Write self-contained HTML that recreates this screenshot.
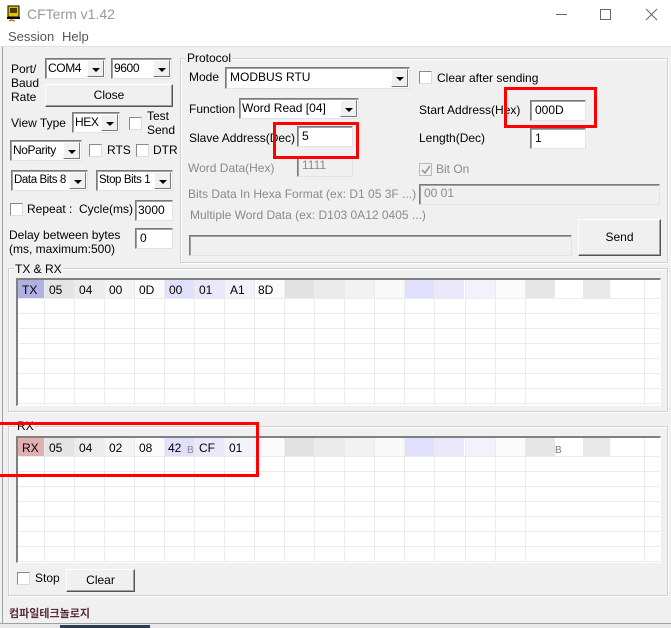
<!DOCTYPE html>
<html><head><meta charset="utf-8"><style>
*{margin:0;padding:0;box-sizing:border-box}
body{width:671px;height:628px;overflow:hidden;background:#f0f0f0;font:12px "Liberation Sans","Noto Sans CJK KR",sans-serif;color:#000;position:relative}
.a{position:absolute;white-space:nowrap}
.t{position:absolute;white-space:nowrap;line-height:14px}
.g{color:#8a8a8a}
.inp{position:absolute;background:#fff;border-top:1px solid #7a7a7a;border-left:1px solid #7a7a7a;border-right:1px solid #e3e3e3;border-bottom:1px solid #e3e3e3;box-shadow:inset 1px 1px 0 #a0a0a0;padding:2px 0 0 4px;line-height:15px;white-space:nowrap;overflow:hidden}
.cmb{padding-left:2px;letter-spacing:-0.4px}
.dis{background:#f0f0f0;color:#8a8a8a}
.cb{position:absolute;width:13px;height:13px;background:#fff;border:1px solid #8a8a8a;border-right-color:#dcdcdc;border-bottom-color:#dcdcdc}
.dd{position:absolute;top:1px;right:1px;bottom:1px;width:17px;background:#f0f0f0;border:1px solid #fff;border-right-color:#777;border-bottom-color:#777}
.dd:after{content:"";position:absolute;left:4px;top:7px;border-left:4px solid transparent;border-right:4px solid transparent;border-top:4px solid #000}
.btn{position:absolute;background:#f0f0f0;border:1px solid #fff;border-right-color:#555;border-bottom-color:#555;box-shadow:inset -1px -1px 0 #a0a0a0;text-align:center}
.grp{position:absolute;border:1px solid #d0d0d0;box-shadow:inset 1px 1px 0 #fff,1px 1px 0 #fff}
.gl{position:absolute;background:#f0f0f0;padding:0 1px;line-height:12px}
.grid{position:absolute;background:#fff;border-top:2px solid #808080;border-left:2px solid #808080;border-right:1px solid #fff;border-bottom:1px solid #fff;overflow:hidden}
.red{position:absolute;border:3px solid #f00}
</style></head><body>
<div class="a" style="left:0;top:0;width:671px;height:46px;background:#fff"></div>
<svg class="a" style="left:7px;top:5px" width="16" height="18" viewBox="0 0 16 18"><rect x="1" y="1" width="11" height="11" fill="#e8c000" stroke="#000"/><rect x="3" y="3" width="7" height="5" fill="#404000"/><path d="M4 12 L4 15 L2 16 M4 15 L8 16" stroke="#806000" fill="none"/><rect x="0" y="12" width="13" height="2" fill="#000"/></svg>
<div class="a" style="left:27px;top:6px;font-size:14px;color:#999">CFTerm v1.42</div>
<div class="a" style="left:556px;top:14px;width:11px;height:1px;background:#666"></div>
<div class="a" style="left:600px;top:9px;width:11px;height:11px;border:1px solid #666"></div>
<svg class="a" style="left:645px;top:8px" width="13" height="13"><path d="M1 1L12 12M12 1L1 12" stroke="#666"/></svg>
<div class="a" style="left:8px;top:29px;font-size:13px;color:#555">Session</div>
<div class="a" style="left:62px;top:29px;font-size:13px;color:#555">Help</div>
<div class="a" style="left:0;top:46px;width:671px;height:1px;background:#e0e0e0"></div>
<div class="a" style="left:2px;top:47px;width:1px;height:576px;background:#a0a0a0"></div>
<div class="a" style="left:0;top:623px;width:671px;height:1px;background:#a0a0a0"></div>
<div class="a" style="left:0;top:624px;width:671px;height:4px;background:#e8e8e8"></div>
<div class="a" style="left:60px;top:625px;width:90px;height:3px;background:#2e3a50"></div>

<div class="t" style="left:11px;top:62px">Port/<br>Baud<br>Rate</div>
<div class="inp cmb" style="left:45px;top:58px;width:61px;height:21px">COM4<div class="dd"></div></div>
<div class="inp cmb" style="left:111px;top:58px;width:61px;height:21px">9600<div class="dd"></div></div>
<div class="btn" style="left:45px;top:84px;width:128px;height:23px;line-height:20px">Close</div>
<div class="t" style="left:11px;top:116px">View Type</div>
<div class="inp cmb" style="left:72px;top:112px;width:48px;height:21px">HEX<div class="dd"></div></div>
<div class="cb" style="left:129px;top:117px"></div>
<div class="t" style="left:147px;top:109px">Test<br>Send</div>
<div class="inp cmb" style="left:10px;top:140px;width:72px;height:21px">NoParity<div class="dd"></div></div>
<div class="cb" style="left:89px;top:144px"></div><div class="t" style="left:107px;top:143px">RTS</div>
<div class="cb" style="left:136px;top:144px"></div><div class="t" style="left:153px;top:143px">DTR</div>
<div class="inp cmb" style="left:11px;top:170px;width:77px;height:21px;font-size:11.5px">Data Bits 8<div class="dd"></div></div>
<div class="inp cmb" style="left:96px;top:170px;width:77px;height:21px;font-size:11.5px">Stop Bits 1<div class="dd"></div></div>
<div class="cb" style="left:10px;top:203px"></div>
<div class="t" style="left:27px;top:202px">Repeat :</div>
<div class="t" style="left:79px;top:202px">Cycle(ms)</div>
<div class="inp" style="left:135px;top:200px;width:38px;height:21px;padding-left:2px">3000</div>
<div class="t" style="left:9px;top:228px">Delay between bytes<br>(ms, maximum:500)</div>
<div class="inp" style="left:135px;top:228px;width:38px;height:21px">0</div>

<div class="grp" style="left:180px;top:58px;width:488px;height:205px"></div>
<div class="gl" style="left:186px;top:52px">Protocol</div>
<div class="t" style="left:189px;top:70px">Mode</div>
<div class="inp" style="left:225px;top:67px;width:185px;height:22px">MODBUS RTU<div class="dd"></div></div>
<div class="cb" style="left:419px;top:71px"></div><div class="t" style="left:437px;top:71px">Clear after sending</div>
<div class="t" style="left:189px;top:102px">Function</div>
<div class="inp cmb" style="left:239px;top:98px;width:120px;height:21px;letter-spacing:0">Word Read [04]<div class="dd"></div></div>
<div class="t" style="left:419px;top:103px">Start Address(Hex)</div>
<div class="inp" style="left:530px;top:100px;width:56px;height:21px">000D</div>
<div class="t" style="left:189px;top:131px">Slave Address(Dec)</div>
<div class="inp" style="left:297px;top:126px;width:56px;height:21px">5</div>
<div class="t" style="left:419px;top:131px">Length(Dec)</div>
<div class="inp" style="left:530px;top:128px;width:56px;height:21px">1</div>
<div class="t g" style="left:188px;top:161px">Word Data(Hex)</div>
<div class="inp dis" style="left:297px;top:156px;width:56px;height:21px;padding-top:1px">1111</div>
<div class="cb" style="left:419px;top:163px;background:#f0f0f0;border-color:#bbb"></div>
<svg class="a" style="left:421px;top:165px" width="10" height="10"><path d="M1 5L4 8L9 1" stroke="#999" stroke-width="1.6" fill="none"/></svg>
<div class="t g" style="left:436px;top:162px">Bit On</div>
<div class="t g" style="left:188px;top:187px">Bits Data In Hexa Format (ex: D1 05 3F ...)</div>
<div class="inp dis" style="left:419px;top:184px;width:241px;height:21px;padding-top:1px">00 01</div>
<div class="t g" style="left:190px;top:208px">Multiple Word Data (ex: D103 0A12 0405 ...)</div>
<div class="inp dis" style="left:189px;top:235px;width:383px;height:21px"></div>
<div class="btn" style="left:578px;top:219px;width:83px;height:37px;line-height:34px">Send</div>

<div class="grp" style="left:8px;top:268px;width:660px;height:144px"></div>
<div class="gl" style="left:14px;top:263px">TX &amp; RX</div>
<div class="grid" style="left:16px;top:278px;width:645px;height:128px">
<svg width="645" height="130" style="position:absolute;left:0;top:0" font-family="Liberation Sans" font-size="12">
<g>
<rect x="0" y="0" width="26" height="18" fill="#b0b0e2"/>
<rect x="27" y="0" width="29" height="18" fill="#e4e4e4"/>
<rect x="57" y="0" width="29" height="18" fill="#ececec"/>
<rect x="87" y="0" width="29" height="18" fill="#f4f4f4"/>
<rect x="117" y="0" width="29" height="18" fill="#fafafa"/>
<rect x="147" y="0" width="29" height="18" fill="#e0e0fc"/>
<rect x="177" y="0" width="29" height="18" fill="#e8e8fa"/>
<rect x="207" y="0" width="29" height="18" fill="#f2f2fc"/>
<rect x="237" y="0" width="29" height="18" fill="#fbfbfe"/>
<rect x="267" y="0" width="29" height="18" fill="#e2e2e2"/>
<rect x="297" y="0" width="29" height="18" fill="#eaeaea"/>
<rect x="327" y="0" width="29" height="18" fill="#f2f2f2"/>
<rect x="357" y="0" width="29" height="18" fill="#f9f9f9"/>
<rect x="387" y="0" width="29" height="18" fill="#e0e0fc"/>
<rect x="417" y="0" width="29" height="18" fill="#e8e8fa"/>
<rect x="448" y="0" width="29" height="18" fill="#f2f2fc"/>
<rect x="478" y="0" width="29" height="18" fill="#fbfbfe"/>
<rect x="508" y="0" width="29" height="18" fill="#e6e6e6"/>
<rect x="565" y="0" width="27" height="18" fill="#e8e8e8"/>
</g>
<g stroke="#ececec">
<path d="M0 18.5H645M0 33.5H645M0 48.5H645M0 63.5H645M0 78.5H645M0 93.5H645M0 108.5H645M0 123.5H645"/>
<path d="M26.5 0V130M56.5 0V130M86.5 0V130M116.5 0V130M146.5 0V130M176.5 0V130M206.5 0V130M236.5 0V130M266.5 0V130M296.5 0V130M326.5 0V130M356.5 0V130M386.5 0V130M416.5 0V130M447.5 0V130M477.5 0V130M507.5 0V130M626.5 0V130"/>
</g>
<g fill="#000"><text x="4" y="14">TX</text><text x="31" y="14">05</text><text x="61" y="14">04</text><text x="91" y="14">00</text><text x="121" y="14">0D</text><text x="151" y="14">00</text><text x="181" y="14">01</text><text x="212" y="14">A1</text><text x="240" y="14">8D</text></g>
</svg></div>

<div class="grp" style="left:8px;top:426px;width:660px;height:170px"></div>
<div class="gl" style="left:16px;top:420px">RX</div>
<div class="grid" style="left:16px;top:436px;width:645px;height:127px">
<svg width="645" height="130" style="position:absolute;left:0;top:0" font-family="Liberation Sans" font-size="12">
<g>
<rect x="0" y="0" width="26" height="18" fill="#e0b0b0"/>
<rect x="27" y="0" width="29" height="18" fill="#e4e4e4"/>
<rect x="57" y="0" width="29" height="18" fill="#ececec"/>
<rect x="87" y="0" width="29" height="18" fill="#f4f4f4"/>
<rect x="117" y="0" width="29" height="18" fill="#fafafa"/>
<rect x="147" y="0" width="29" height="18" fill="#e0e0fc"/>
<rect x="177" y="0" width="29" height="18" fill="#e8e8fa"/>
<rect x="207" y="0" width="29" height="18" fill="#f2f2fc"/>
<rect x="237" y="0" width="29" height="18" fill="#fbfbfe"/>
<rect x="267" y="0" width="29" height="18" fill="#e2e2e2"/>
<rect x="297" y="0" width="29" height="18" fill="#eaeaea"/>
<rect x="327" y="0" width="29" height="18" fill="#f2f2f2"/>
<rect x="357" y="0" width="29" height="18" fill="#f9f9f9"/>
<rect x="387" y="0" width="29" height="18" fill="#e0e0fc"/>
<rect x="417" y="0" width="29" height="18" fill="#e8e8fa"/>
<rect x="448" y="0" width="29" height="18" fill="#f2f2fc"/>
<rect x="478" y="0" width="29" height="18" fill="#fbfbfe"/>
<rect x="508" y="0" width="29" height="18" fill="#e6e6e6"/>
<rect x="565" y="0" width="27" height="18" fill="#e8e8e8"/>
</g>
<g stroke="#ececec">
<path d="M0 18.5H645M0 33.5H645M0 48.5H645M0 63.5H645M0 78.5H645M0 93.5H645M0 108.5H645M0 123.5H645"/>
<path d="M26.5 0V130M56.5 0V130M86.5 0V130M116.5 0V130M146.5 0V130M176.5 0V130M206.5 0V130M236.5 0V130M266.5 0V130M296.5 0V130M326.5 0V130M356.5 0V130M386.5 0V130M416.5 0V130M447.5 0V130M477.5 0V130M507.5 0V130M626.5 0V130"/>
</g>
<g fill="#000"><text x="4" y="14">RX</text><text x="31" y="14">05</text><text x="61" y="14">04</text><text x="91" y="14">02</text><text x="121" y="14">08</text><text x="150" y="14">42</text><text x="181" y="14">CF</text><text x="211" y="14">01</text></g>
<text x="169" y="15" font-size="10" fill="#888">B</text><text x="537" y="15" font-size="10" fill="#777">B</text>
</svg></div>
<div class="cb" style="left:17px;top:572px"></div>
<div class="t" style="left:35px;top:571px">Stop</div>
<div class="btn" style="left:66px;top:569px;width:69px;height:23px;line-height:20px">Clear</div>
<div class="a" style="left:9px;top:605px;font-weight:bold;color:#5a2a3a;font-size:11px">컴파일테크놀로지</div>

<div class="red" style="left:504px;top:87px;width:93px;height:41px"></div>
<div class="red" style="left:273px;top:122px;width:86px;height:37px"></div>
<div class="red" style="left:-5px;top:422px;width:264px;height:55px"></div>
</body></html>
